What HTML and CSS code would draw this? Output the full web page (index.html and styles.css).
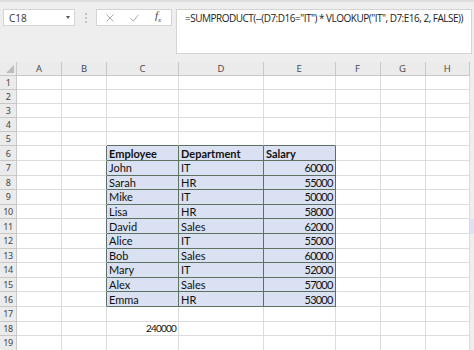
FILE: index.html
```html
<!DOCTYPE html>
<html lang="en">
<head>
    <meta charset="UTF-8">
    <title>Sheet</title>
    <link rel="stylesheet" href="styles.css">
</head>
<body>
    <div class="topbar">
        <div class="namebox"><span>C18</span><span class="caret"></span></div>
        <div class="grip"><i></i><i></i><i></i></div>
        <div class="fxbox">
            <svg width="8" height="8" viewBox="0 0 8 8"><path d="M0.5 0.5L7.5 7.5M7.5 0.5L0.5 7.5" stroke="#a9a9a9" stroke-width="1" fill="none"/></svg>
            <svg width="9" height="8" viewBox="0 0 9 8"><path d="M0.5 4.5L3.3 7.2L8.5 0.8" stroke="#a9a9a9" stroke-width="1" fill="none"/></svg>
            <span class="fx">f<sub>x</sub></span>
        </div>
        <div class="formula">=SUMPRODUCT(--(D7:D16="IT") * VLOOKUP("IT", D7:E16, 2, FALSE))</div>
    </div>

    <div class="sheet">
        <div class="corner"><svg width="8" height="8" viewBox="0 0 8 8"><polygon points="8,0 8,8 0,8" fill="#bcbcbc"/></svg></div>
        <div class="h">A</div><div class="h">B</div><div class="h">C</div><div class="h">D</div><div class="h">E</div><div class="h">F</div><div class="h">G</div><div class="h">H</div><div class="edge"></div>

        <div class="r">1</div><div></div><div></div><div></div><div></div><div></div><div></div><div></div><div></div><div class="edge"></div>
        <div class="r">2</div><div></div><div></div><div></div><div></div><div></div><div></div><div></div><div></div><div class="edge"></div>
        <div class="r">3</div><div></div><div></div><div></div><div></div><div></div><div></div><div></div><div></div><div class="edge"></div>
        <div class="r">4</div><div></div><div></div><div></div><div></div><div></div><div></div><div></div><div></div><div class="edge"></div>
        <div class="r">5</div><div></div><div></div><div class="tt"></div><div class="tt"></div><div class="tt"></div><div></div><div></div><div></div><div class="edge"></div>

        <div class="r">6</div><div></div><div class="tl"></div><div class="t b">Employee</div><div class="t b">Department</div><div class="t b">Salary</div><div></div><div></div><div></div><div class="edge"></div>
        <div class="r">7</div><div></div><div class="tl"></div><div class="t">John</div><div class="t">IT</div><div class="t n">60000</div><div></div><div></div><div></div><div class="edge"></div>
        <div class="r">8</div><div></div><div class="tl"></div><div class="t">Sarah</div><div class="t">HR</div><div class="t n">55000</div><div></div><div></div><div></div><div class="edge"></div>
        <div class="r">9</div><div></div><div class="tl"></div><div class="t">Mike</div><div class="t">IT</div><div class="t n">50000</div><div></div><div></div><div></div><div class="edge"></div>
        <div class="r">10</div><div></div><div class="tl"></div><div class="t">Lisa</div><div class="t">HR</div><div class="t n">58000</div><div></div><div></div><div></div><div class="edge"></div>
        <div class="r">11</div><div></div><div class="tl"></div><div class="t">David</div><div class="t">Sales</div><div class="t n">62000</div><div></div><div></div><div></div><div class="edge sel"></div>
        <div class="r">12</div><div></div><div class="tl"></div><div class="t">Alice</div><div class="t">IT</div><div class="t n">55000</div><div></div><div></div><div></div><div class="edge"></div>
        <div class="r">13</div><div></div><div class="tl"></div><div class="t">Bob</div><div class="t">Sales</div><div class="t n">60000</div><div></div><div></div><div></div><div class="edge"></div>
        <div class="r">14</div><div></div><div class="tl"></div><div class="t">Mary</div><div class="t">IT</div><div class="t n">52000</div><div></div><div></div><div></div><div class="edge"></div>
        <div class="r">15</div><div></div><div class="tl"></div><div class="t">Alex</div><div class="t">Sales</div><div class="t n">57000</div><div></div><div></div><div></div><div class="edge"></div>
        <div class="r">16</div><div></div><div class="tl"></div><div class="t">Emma</div><div class="t">HR</div><div class="t n">53000</div><div></div><div></div><div></div><div class="edge"></div>

        <div class="r">17</div><div></div><div></div><div></div><div></div><div></div><div></div><div></div><div></div><div class="edge"></div>
        <div class="r">18</div><div></div><div></div><div class="n sum">240000</div><div></div><div></div><div></div><div></div><div></div><div class="edge"></div>
        <div class="r">19</div><div></div><div></div><div></div><div></div><div></div><div></div><div></div><div></div><div class="edge"></div>
    </div>
</body>
</html>
```

FILE: styles.css
```css
* {
    margin: 0;
    padding: 0;
    box-sizing: border-box;
}

html, body {
    width: 100%;
    height: 100%;
    background-color: #FFFFFF;
    overflow: hidden;
}

body {
    font-family: "Lato", sans-serif;
    color: #111111;
}

/* barra de formula */
.topbar {
    height: 62px;
    background-color: #EEEEEE;
    border-top: 2px solid #DEDEDE;
    display: flex;
    align-items: flex-start;
    padding: 7px 2px 0 3px;
}

.namebox {
    width: 72px;
    height: 17px;
    background-color: #FFFFFF;
    border: 1px solid #D4D4D4;
    display: flex;
    align-items: center;
    justify-content: space-between;
    padding: 0 4px 0 5px;
    font-family: "Open Sans", sans-serif;
    font-size: 10px;
    color: #333333;
}

.caret {
    width: 0;
    height: 0;
    border-left: 2.5px solid transparent;
    border-right: 2.5px solid transparent;
    border-top: 3px solid #555555;
}

.grip {
    width: 21px;
    height: 17px;
    display: flex;
    flex-direction: column;
    align-items: center;
    justify-content: center;
    gap: 2px;
}

.grip i {
    width: 2px;
    height: 2px;
    border-radius: 50%;
    background-color: #B4B4B4;
}

.fxbox {
    width: 76px;
    height: 17px;
    background-color: #FFFFFF;
    border: 1px solid #D4D4D4;
    display: flex;
    align-items: center;
    gap: 16px;
    padding-left: 9px;
}

.fx {
    font-family: "Liberation Serif", serif;
    font-style: italic;
    font-size: 11px;
    color: #444444;
    line-height: 1;
}

.fx sub {
    font-size: 7px;
}

.formula {
    margin-left: 4px;
    width: 296px;
    height: 45px;
    background-color: #FFFFFF;
    border: 1px solid #D4D4D4;
    padding: 1px 0 0 8px;
    font-family: "Open Sans", sans-serif;
    font-size: 10px;
    letter-spacing: -0.5px;
    line-height: 14px;
    color: #222222;
    white-space: nowrap;
    overflow: hidden;
}

/* planilha */
.sheet {
    display: grid;
    grid-template-columns: 17px 45px 45px 72px 85px 71.5px 45px 45px 44.5px 1fr;
    grid-template-rows: 14px repeat(5, 14px) 15px repeat(13, 14.6px);
}

.sheet > div {
    border-right: 1px solid #DCDCDC;
    border-bottom: 1px solid #DCDCDC;
    padding: 0 2px;
    display: flex;
    align-items: center;
    font-size: 11px;
    white-space: nowrap;
    overflow: hidden;
}

.sheet > .corner {
    background-color: #EBEBEB;
    border-color: #C8C8C8;
    justify-content: flex-end;
    align-items: flex-end;
    padding: 0 2px 2px 0;
}

.sheet > .h {
    background-color: #EBEBEB;
    border-color: #C8C8C8;
    justify-content: center;
    font-family: "Open Sans", sans-serif;
    font-size: 9.5px;
    color: #444444;
}

.sheet > .r {
    background-color: #EBEBEB;
    border-color: #C8C8C8;
    justify-content: center;
    font-family: "Noto Sans", sans-serif;
    font-size: 9px;
    letter-spacing: -0.4px;
    color: #444444;
}

.sheet > .edge {
    background-color: #EEEEEE;
    border: none;
}

.sheet > .sel {
    background-color: #DCE2F3;
}

.sheet > .t {
    background-color: #D9E1F2;
    border-right-color: #5D7262;
    border-bottom-color: #5D7262;
}

.sheet > .tl {
    border-right-color: #5D7262;
}

.sheet > .tt {
    border-bottom-color: #5D7262;
}

.b {
    font-weight: bold;
}

.sheet > .n {
    justify-content: flex-end;
    letter-spacing: -0.8px;
}

.sheet > .sum {
    font-size: 10px;
}
```
